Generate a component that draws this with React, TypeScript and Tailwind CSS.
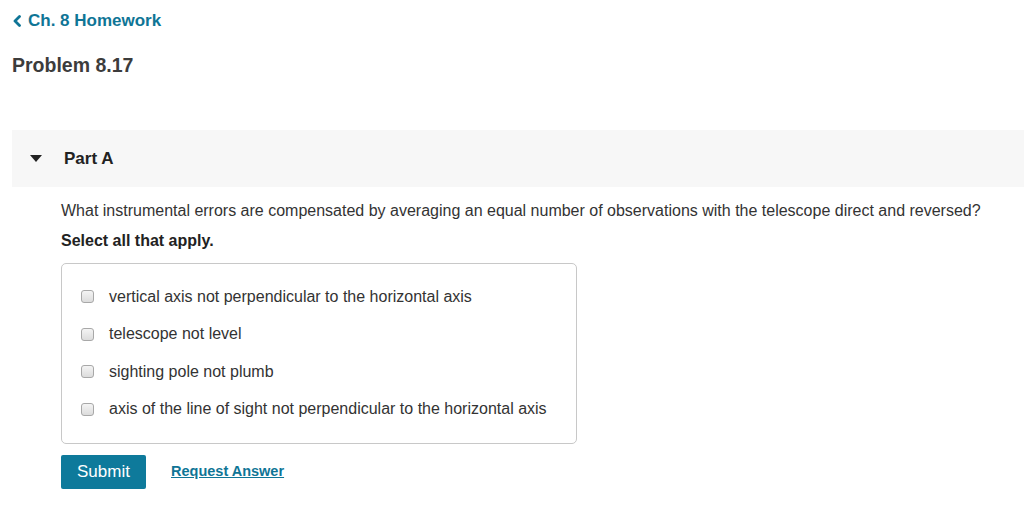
import React from 'react';

const options = [
  'vertical axis not perpendicular to the horizontal axis',
  'telescope not level',
  'sighting pole not plumb',
  'axis of the line of sight not perpendicular to the horizontal axis',
];

export default function App() {
  return (
    <div className="bg-white min-h-[513px] w-[1024px] text-[#333] font-['Liberation_Sans',Arial,sans-serif]">
      <div className="pl-[12px] pt-[10px]">
        <a className="flex items-center gap-[6px] text-[#0f7596] font-bold text-[17px] leading-[21px]">
          <svg width="10" height="12" viewBox="0 0 10 12">
            <path d="M7.5 1.5 L3 6 L7.5 10.5" stroke="#0f7596" strokeWidth="2.8" fill="none" strokeLinecap="round" strokeLinejoin="round" />
          </svg>
          Ch. 8 Homework
        </a>
        <h1 className="mt-[22px] font-bold text-[19.5px] leading-[24px] text-[#3c3c3c]">Problem 8.17</h1>
      </div>

      <div className="ml-[12px] mt-[53px] h-[57px] bg-[#f7f7f7] flex items-center">
        <svg className="ml-[18px]" width="12" height="8" viewBox="0 0 12 8">
          <path d="M0 0 H12 L6 7 Z" fill="#222" />
        </svg>
        <span className="ml-[22px] font-bold text-[17px] text-[#222]">Part A</span>
      </div>

      <div className="pl-[61px]">
        <p className="mt-[14px] text-[16px] leading-[20px]">
          What instrumental errors are compensated by averaging an equal number of observations with the telescope direct and reversed?
        </p>
        <p className="mt-[10px] text-[16px] leading-[20px] font-bold text-[#222]">Select all that apply.</p>

        <div className="mt-[12px] w-[516px] h-[181px] border border-[#c8c8c8] rounded-[5px] pt-[14px] pl-[19px]">
          {options.map(o => (
            <label key={o} className="flex items-center h-[37.5px]">
              <span className="w-[13px] h-[13px] rounded-[3px] border border-[#a8a8a8] bg-gradient-to-b from-[#f4f4f4] to-[#dcdcdc]" />
              <span className="ml-[15px] text-[16px] text-[#333]">{o}</span>
            </label>
          ))}
        </div>

        <div className="mt-[11px] flex items-center">
          <button className="w-[85px] h-[34px] bg-[#0e7a9b] rounded-[2px] text-white text-[17px]">Submit</button>
          <a className="ml-[25px] text-[14.5px] font-bold text-[#0f7596] underline">Request Answer</a>
        </div>
      </div>
    </div>
  );
}
